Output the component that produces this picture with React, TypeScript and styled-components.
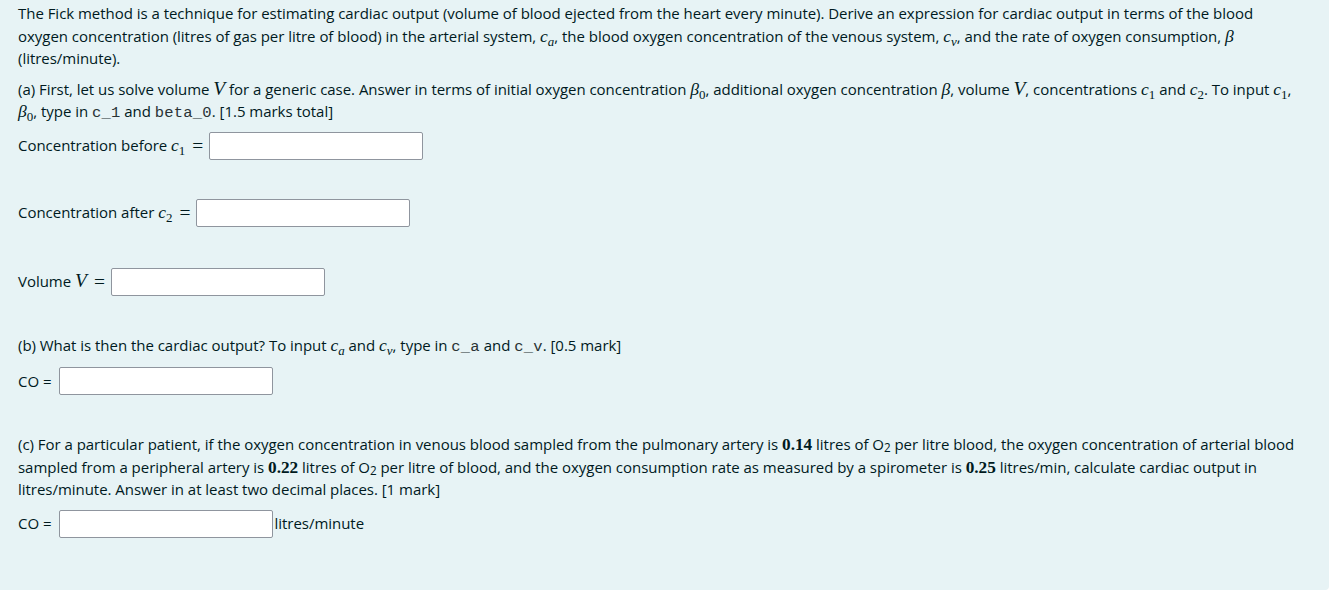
import styled, { createGlobalStyle } from "styled-components"

const Global = createGlobalStyle`
  body {
    margin: 0;
    background: #ffffff;
  }
`

const Panel = styled.div`
  box-sizing: border-box;
  width: 1329px;
  height: 590px;
  padding: 2px 29px 0 18px;
  background: #e7f3f5;
  color: #001a1e;
  font-family: "Open Sans", "Noto Sans", sans-serif;
  font-size: 15px;
  line-height: 22.5px;
  letter-spacing: -0.03px;
  border-radius: 0 0 4px 0;
`

const Para = styled.p<{ $after: number }>`
  margin: 0 0 ${(p) => p.$after}px;
`

const AnswerRow = styled.div<{ $after?: number }>`
  display: flex;
  align-items: center;
  height: 28px;
  margin-bottom: ${(p) => p.$after ?? 0}px;
  white-space: nowrap;
`

const Label = styled.span``

const Field = styled.input<{ $gap: number }>`
  box-sizing: border-box;
  width: 214px;
  height: 28px;
  margin: 0 1px 0 ${(p) => p.$gap}px;
  padding: 0 6px;
  border: 1px solid #8f959e;
  border-radius: 2px;
  background: #ffffff;
  font: inherit;
  outline: none;
`

const Unit = styled.span``

// maths, set in a serif face like the MathJax output
const M = styled.span`
  font-family: "Liberation Serif", "DejaVu Serif", serif;
  font-style: italic;
  font-size: 1.17em;
  letter-spacing: 0;
  line-height: 0;
`

const Big = styled(M)`
  font-size: 1.3em;
`

const Sub = styled.span<{ $up?: boolean }>`
  font-size: 0.74em;
  font-style: ${(p) => (p.$up ? "normal" : "italic")};
  vertical-align: -0.28em;
  line-height: 0;
`

const Eq = styled.span`
  font-family: "Liberation Serif", "DejaVu Serif", serif;
  font-size: 1.3em;
  line-height: 0;
  margin-left: 7px;
`

const Num = styled.span`
  font-family: "Liberation Serif", "DejaVu Serif", serif;
  font-weight: bold;
  font-size: 1.15em;
  letter-spacing: 0;
  line-height: 0;
`

const Code = styled.code`
  font-family: "Liberation Mono", "DejaVu Sans Mono", monospace;
  font-size: 15.5px;
  letter-spacing: 0.2px;
  line-height: 0;
  color: #2a3336;
`

const Chem = styled.sub`
  font-size: 0.78em;
  line-height: 0;
  vertical-align: -0.2em;
`

const Var = ({ v, sub, up }: { v: string; sub?: string; up?: boolean }) => (
  <M>
    {v}
    {sub && <Sub $up={up}>{sub}</Sub>}
  </M>
)

export default function App() {
  return (
    <>
      <Global />
      <Panel>
        <Para $after={8}>
          The Fick method is a technique for estimating cardiac output (volume of blood ejected from
          the heart every minute). Derive an expression for cardiac output in terms of the blood
          oxygen concentration (litres of gas per litre of blood) in the arterial system,{" "}
          <Var v="c" sub="a" />, the blood oxygen concentration of the venous system,{" "}
          <Var v="c" sub="v" />, and the rate of oxygen consumption, <Var v="β" /> (litres/minute).
        </Para>
        <Para $after={9}>
          (a) First, let us solve volume <Big>V</Big> for a generic case. Answer in terms of initial
          oxygen concentration <Var v="β" sub="0" up />, additional oxygen concentration{" "}
          <Var v="β" />, volume <Big>V</Big>, concentrations <Var v="c" sub="1" up /> and{" "}
          <Var v="c" sub="2" up />. To input <Var v="c" sub="1" up />, <Var v="β" sub="0" up />,
          type in <Code>c_1</Code> and <Code>beta_0</Code>. [1.5 marks total]
        </Para>

        <AnswerRow $after={39}>
          <Label>
            Concentration before <Var v="c" sub="1" up />
          </Label>
          <Eq>=</Eq>
          <Field $gap={6} type="text" />
        </AnswerRow>
        <AnswerRow $after={41}>
          <Label>
            Concentration after <Var v="c" sub="2" up />
          </Label>
          <Eq>=</Eq>
          <Field $gap={6} type="text" />
        </AnswerRow>
        <AnswerRow $after={38}>
          <Label>
            Volume <Big>V</Big>
          </Label>
          <Eq>=</Eq>
          <Field $gap={6} type="text" />
        </AnswerRow>

        <Para $after={11}>
          (b) What is then the cardiac output? To input <Var v="c" sub="a" /> and{" "}
          <Var v="c" sub="v" />, type in <Code>c_a</Code> and <Code>c_v</Code>. [0.5 mark]
        </Para>
        <AnswerRow $after={38}>
          <Label>CO =</Label>
          <Field $gap={8} type="text" />
        </AnswerRow>

        <Para $after={9}>
          (c) For a particular patient, if the oxygen concentration in venous blood sampled from the
          pulmonary artery is <Num>0.14</Num> litres of O<Chem>2</Chem> per litre blood, the oxygen
          concentration of arterial blood sampled from a peripheral artery is <Num>0.22</Num> litres
          of O<Chem>2</Chem> per litre of blood, and the oxygen consumption rate as measured by a
          spirometer is <Num>0.25</Num> litres/min, calculate cardiac output in litres/minute. Answer
          in at least two decimal places. [1 mark]
        </Para>
        <AnswerRow>
          <Label>CO =</Label>
          <Field $gap={8} type="text" />
          <Unit>litres/minute</Unit>
        </AnswerRow>
      </Panel>
    </>
  )
}
